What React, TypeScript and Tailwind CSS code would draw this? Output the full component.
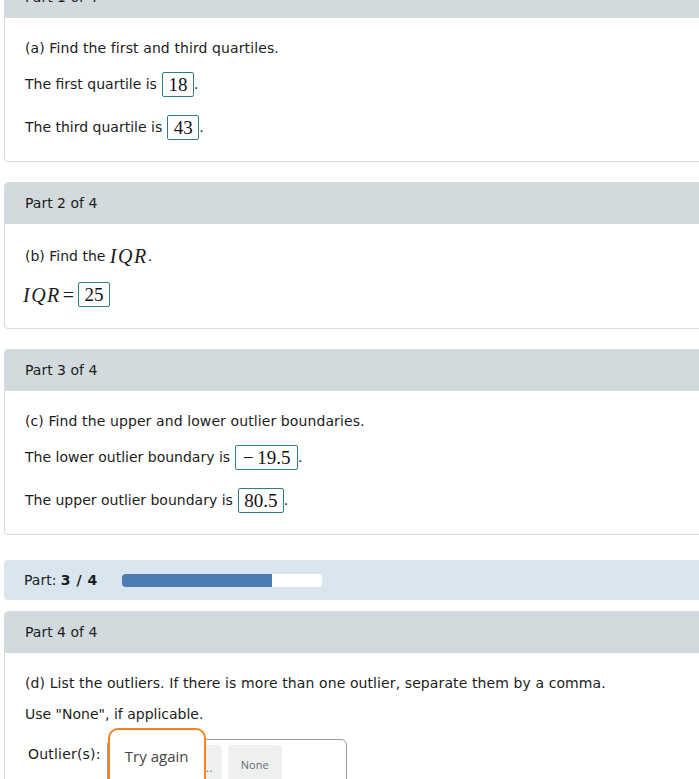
import React from "react";

const sans = { fontFamily: '"DejaVu Sans", Verdana, sans-serif' };

function Box({ children, w }: { children: React.ReactNode; w: string }) {
  return (
    <span
      className={`inline-flex items-center justify-center h-[25px] ${w} border border-[#2f7d88] rounded-[2px] text-[19px] text-[#111] leading-none`}
      style={{ fontFamily: '"Liberation Serif", "Times New Roman", serif' }}
    >
      {children}
    </span>
  );
}

function Card({
  title,
  children,
  className = "",
}: {
  title: string;
  children: React.ReactNode;
  className?: string;
}) {
  return (
    <div className={`w-[730px] border border-[#d6dcde] rounded-[4px] overflow-hidden bg-white ${className}`}>
      <div className="h-[41px] bg-[#d2dadd] flex items-center pl-[20px] text-[14px] text-[#1c1c1c]">{title}</div>
      {children}
    </div>
  );
}

const serifItalic = { fontFamily: '"Liberation Serif", "Times New Roman", serif', fontStyle: "italic" as const };

export default function App() {
  return (
    <div className="w-[699px] h-[779px] overflow-hidden bg-white text-[#1c1c1c]" style={sans}>
      <div className="mt-[-24px] pl-[4px] flex flex-col">
        <Card title="Part 1 of 4">
          <div className="pl-[20px] pt-[20px] pb-[21px] text-[14px]">
            <p className="leading-[20px] tracking-[0.1px]">(a) Find the first and third quartiles.</p>
            <div className="mt-[14px] flex items-center h-[25px]">
              <span>The first quartile is</span>
              <span className="ml-[5px]"><Box w="w-[32px]">18</Box></span>
              <span>.</span>
            </div>
            <div className="mt-[18px] flex items-center h-[25px]">
              <span>The third quartile is</span>
              <span className="ml-[5px]"><Box w="w-[32px]">43</Box></span>
              <span>.</span>
            </div>
          </div>
        </Card>

        <Card title="Part 2 of 4" className="mt-[20px]">
          <div className="pl-[20px] pt-[20px] pb-[21px] text-[14px]">
            <div className="flex items-center h-[24px]">
              <span>(b) Find the&nbsp;</span>
              <span className="text-[20px] tracking-[1.5px]" style={serifItalic}>IQR</span>
              <span>.</span>
            </div>
            <div className="mt-[14px] flex items-center h-[25px]">
              <span className="text-[20px] tracking-[1.5px] ml-[-2px]" style={serifItalic}>IQR</span>
              <span className="text-[20px] ml-[2px] mr-[4px]" style={{ fontFamily: '"Liberation Serif", serif' }}>=</span>
              <Box w="w-[32px]">25</Box>
            </div>
          </div>
        </Card>

        <Card title="Part 3 of 4" className="mt-[20px]">
          <div className="pl-[20px] pt-[20px] pb-[21px] text-[14px]">
            <p className="leading-[20px] tracking-[0.1px]">(c) Find the upper and lower outlier boundaries.</p>
            <div className="mt-[14px] flex items-center h-[25px]">
              <span>The lower outlier boundary is</span>
              <span className="ml-[5px]"><Box w="w-[63px]">−&thinsp;19.5</Box></span>
              <span>.</span>
            </div>
            <div className="mt-[18px] flex items-center h-[25px]">
              <span>The upper outlier boundary is</span>
              <span className="ml-[5px]"><Box w="w-[46px]">80.5</Box></span>
              <span>.</span>
            </div>
          </div>
        </Card>

        <div className="mt-[25px] w-[730px] h-[40px] bg-[#d9e5ef] rounded-[4px] flex items-center pl-[20px] text-[14px]">
          <span>
            Part: <span className="font-bold tracking-[0.5px]">3 / 4</span>
          </span>
          <div className="ml-[24px] w-[200px] h-[13px] bg-white rounded-[3px] overflow-hidden">
            <div className="h-full bg-[#497db3] rounded-l-[3px]" style={{ width: "75%" }} />
          </div>
        </div>

        <Card title="Part 4 of 4" className="mt-[11px]">
          <div className="pl-[20px] pt-[20px] pb-[40px] text-[14px]">
            <p className="leading-[20px] tracking-[0.1px]">
              (d) List the outliers. If there is more than one outlier, separate them by a comma.
            </p>
            <p className="leading-[20px] mt-[11px]">Use "None", if applicable.</p>
            <div className="mt-[15px] flex items-start">
              <span className="ml-[3px] mt-[5px] leading-[20px] tracking-[0.2px]">Outlier(s):</span>
              <div className="relative ml-[6px]">
                <div className="w-[240px] h-[60px] border border-[#8f9ea3] rounded-[6px] flex items-start gap-[6px] pt-[5px] pl-[5px]">
                  <div className="w-[109px] h-[40px] bg-[#eef0f0] rounded-[4px] flex items-end justify-end pr-[9px] pb-[8px] text-[11px] text-[#5d6c72]">..</div>
                  <div
                    className="w-[54px] h-[40px] bg-[#eef0f0] rounded-[4px] flex items-center justify-center text-[11px] text-[#5d6c72]"
                    style={{ fontFamily: '"Open Sans", "Liberation Sans", sans-serif' }}
                  >
                    None
                  </div>
                </div>
                <div
                  className="absolute left-[1px] top-[-11px] w-[98px] h-[60px] bg-white border-2 border-[#f5841f] rounded-[10px] flex items-start justify-center pt-[15px] text-[15px] text-[#454545]"
                  style={{ fontFamily: '"Open Sans", "Liberation Sans", sans-serif' }}
                >
                  Try again
                </div>
              </div>
            </div>
          </div>
        </Card>
      </div>
    </div>
  );
}
